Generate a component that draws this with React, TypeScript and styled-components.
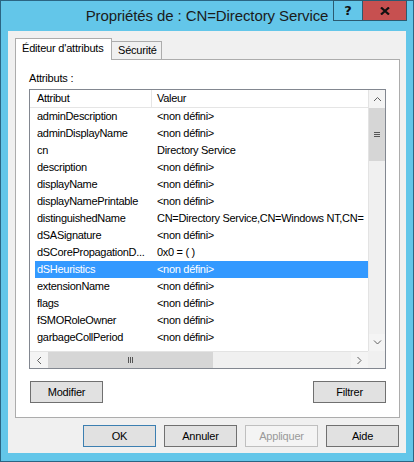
import React from "react";
import styled, { createGlobalStyle } from "styled-components";

const Global = createGlobalStyle`
  html, body { margin: 0; padding: 0; background: #ffffff; }
  body { font-family: "Liberation Sans", Arial, sans-serif; }
  * { box-sizing: border-box; }
`;

const Window = styled.div`
  position: relative;
  width: 414px;
  height: 462px;
  border: 1px solid #2b6583;
  background: #63c6e9;
  padding: 0 7px 8px 7px;
  display: flex;
  flex-direction: column;
`;

const TitleBar = styled.div`
  height: 30px;
  flex: none;
  display: flex;
  align-items: center;
  justify-content: center;
  padding-bottom: 2px;
  font-size: 15px;
  letter-spacing: -0.1px;
  color: #1b1b1b;
  white-space: nowrap;
`;

const CaptionGroup = styled.div`
  position: absolute;
  top: -1px;
  right: 6px;
  display: flex;
`;

const CaptionButton = styled.div<{ $close?: boolean }>`
  width: ${(p) => (p.$close ? "45px" : "30px")};
  height: 21px;
  margin-left: ${(p) => (p.$close ? "-1px" : "0")};
  border: 1px solid #2b5a70;
  background: ${(p) => (p.$close ? "#c75050" : "#63c6e9")};
  display: flex;
  align-items: center;
  justify-content: center;
  font-weight: bold;
  font-size: 13px;
  color: #111;
  font-family: "DejaVu Sans", "Liberation Sans", sans-serif;
`;

const Client = styled.div`
  flex: 1;
  background: #f0f0f0;
  padding: 7px 6px 6px 7px;
  display: flex;
  flex-direction: column;
`;

const TabStrip = styled.div`
  height: 21px;
  flex: none;
  display: flex;
  align-items: flex-end;
`;

const Tab = styled.div<{ $active?: boolean }>`
  position: relative;
  z-index: ${(p) => (p.$active ? 1 : 0)};
  height: ${(p) => (p.$active ? "22px" : "18px")};
  width: ${(p) => (p.$active ? "97px" : "51px")};
  margin-bottom: ${(p) => (p.$active ? "-1px" : "0")};
  margin-left: ${(p) => (p.$active ? "0" : "-1px")};
  padding-left: 6px;
  padding-bottom: ${(p) => (p.$active ? "3px" : "1px")};
  border: 1px solid #acacac;
  border-bottom: none;
  background: ${(p) => (p.$active ? "#ffffff" : "#f0f0f0")};
  display: flex;
  align-items: center;
  font-size: 11px;
  letter-spacing: -0.2px;
  color: #000;
  white-space: nowrap;
`;

const Panel = styled.div`
  height: 359px;
  flex: none;
  border: 1px solid #acacac;
  background: #ffffff;
  padding: 10px 13px 14px 13px;
  display: flex;
  flex-direction: column;
`;

const Label = styled.div`
  height: 16px;
  line-height: 16px;
  margin-bottom: 3px;
  font-size: 11px;
  letter-spacing: -0.2px;
  color: #000;
`;

const ListBox = styled.div`
  height: 280px;
  flex: none;
  border: 1px solid #828790;
  display: grid;
  grid-template-columns: 1fr 17px;
  grid-template-rows: 18px 1fr 17px;
  overflow: hidden;
  font-size: 11px;
  letter-spacing: -0.3px;
  color: #000;
`;

const Header = styled.div`
  grid-column: 1;
  grid-row: 1;
  display: flex;
  border-bottom: 1px solid #e5e5e5;
  background: #ffffff;
`;

const HeaderCell = styled.div<{ $first?: boolean }>`
  width: ${(p) => (p.$first ? "122px" : "auto")};
  flex: ${(p) => (p.$first ? "none" : "1")};
  padding-left: ${(p) => (p.$first ? "7px" : "5px")};
  border-right: ${(p) => (p.$first ? "1px solid #e5e5e5" : "none")};
  line-height: 17px;
  white-space: nowrap;
`;

const Body = styled.div`
  grid-column: 1;
  grid-row: 2;
  overflow: hidden;
  padding-left: 5px;
`;

const Row = styled.div<{ $selected?: boolean }>`
  display: flex;
  height: 17px;
  line-height: 17px;
  background: ${(p) => (p.$selected ? "#3399ff" : "transparent")};
  color: ${(p) => (p.$selected ? "#ffffff" : "#000000")};
  white-space: nowrap;
`;

const NameCell = styled.div`
  width: 122px;
  flex: none;
  padding-left: 2px;
  overflow: hidden;
`;

const ValueCell = styled.div`
  flex: 1;
  overflow: hidden;
`;

const VScroll = styled.div`
  grid-column: 2;
  grid-row: 1 / span 2;
  display: flex;
  flex-direction: column;
  background: #f0f0f0;
  border-left: 1px solid #e3e3e3;
`;

const HScroll = styled.div`
  grid-column: 1;
  grid-row: 3;
  display: flex;
  background: #f0f0f0;
  border-top: 1px solid #e3e3e3;
`;

const Corner = styled.div`
  grid-column: 2;
  grid-row: 3;
  background: #f0f0f0;
`;

const ArrowBox = styled.div<{ $size: number; $vertical?: boolean }>`
  flex: none;
  ${(p) => (p.$vertical ? `height: ${p.$size}px;` : `width: ${p.$size}px;`)}
  display: flex;
  align-items: center;
  justify-content: center;
  background: #f4f4f4;
`;

const Thumb = styled.div<{ $size: number; $vertical?: boolean }>`
  flex: none;
  ${(p) => (p.$vertical ? `height: ${p.$size}px;` : `width: ${p.$size}px;`)}
  background: #d6d6d6;
  display: flex;
  align-items: center;
  justify-content: center;
`;

const Track = styled.div`
  flex: 1;
`;

const ButtonRow = styled.div`
  margin-top: 12px;
  display: flex;
  justify-content: space-between;
  padding-left: 1px;
`;

const Button = styled.div<{ $default?: boolean; $disabled?: boolean }>`
  width: 73px;
  height: 22px;
  border: 1px solid
    ${(p) => (p.$default ? "#3c7fb1" : p.$disabled ? "#bfbfbf" : "#707070")};
  background: ${(p) => (p.$disabled ? "#f4f4f4" : "#e1e1e1")};
  color: ${(p) => (p.$disabled ? "#9a9a9a" : "#000000")};
  display: flex;
  align-items: center;
  justify-content: center;
  font-size: 11px;
  letter-spacing: -0.2px;
`;

const Footer = styled.div`
  margin-top: 7px;
  display: flex;
  justify-content: flex-end;
  gap: 8px;
  padding-right: 1px;
`;

const Chevron = ({ dir }: { dir: "up" | "down" | "left" | "right" }) => {
  const d = {
    up: "M1 5 L4.5 1.5 L8 5",
    down: "M1 1.5 L4.5 5 L8 1.5",
    left: "M5 1 L1.5 4.5 L5 8",
    right: "M1.5 1 L5 4.5 L1.5 8",
  }[dir];
  const vertical = dir === "up" || dir === "down";
  return (
    <svg
      width={vertical ? 9 : 7}
      height={vertical ? 7 : 9}
      viewBox={vertical ? "0 0 9 7" : "0 0 7 9"}
    >
      <path d={d} fill="none" stroke="#606060" strokeWidth="1" />
    </svg>
  );
};

const Grip = ({ vertical }: { vertical?: boolean }) =>
  vertical ? (
    <svg width="6" height="5" viewBox="0 0 6 5">
      <rect x="0" y="0" width="6" height="1" fill="#555" />
      <rect x="0" y="2" width="6" height="1" fill="#555" />
      <rect x="0" y="4" width="6" height="1" fill="#555" />
    </svg>
  ) : (
    <svg width="5" height="6" viewBox="0 0 5 6">
      <rect x="0" y="0" width="1" height="6" fill="#555" />
      <rect x="2" y="0" width="1" height="6" fill="#555" />
      <rect x="4" y="0" width="1" height="6" fill="#555" />
    </svg>
  );

const rows: [string, string][] = [
  ["adminDescription", "<non défini>"],
  ["adminDisplayName", "<non défini>"],
  ["cn", "Directory Service"],
  ["description", "<non défini>"],
  ["displayName", "<non défini>"],
  ["displayNamePrintable", "<non défini>"],
  ["distinguishedName", "CN=Directory Service,CN=Windows NT,CN="],
  ["dSASignature", "<non défini>"],
  ["dSCorePropagationD...", "0x0 = (  )"],
  ["dSHeuristics", "<non défini>"],
  ["extensionName", "<non défini>"],
  ["flags", "<non défini>"],
  ["fSMORoleOwner", "<non défini>"],
  ["garbageCollPeriod", "<non défini>"],
];

export default function App() {
  return (
    <>
      <Global />
      <Window>
        <TitleBar>Propriétés de : CN=Directory Service</TitleBar>
        <CaptionGroup>
          <CaptionButton>?</CaptionButton>
          <CaptionButton $close>
            <svg width="10" height="8" viewBox="0 0 10 8">
              <path d="M1 0.5 L9 7.5 M9 0.5 L1 7.5" stroke="#111" strokeWidth="2.2" />
            </svg>
          </CaptionButton>
        </CaptionGroup>
        <Client>
          <TabStrip>
            <Tab $active>Éditeur d'attributs</Tab>
            <Tab>Sécurité</Tab>
          </TabStrip>
          <Panel>
            <Label>Attributs :</Label>
            <ListBox>
              <Header>
                <HeaderCell $first>Attribut</HeaderCell>
                <HeaderCell>Valeur</HeaderCell>
              </Header>
              <Body>
                {rows.map(([name, value]) => (
                  <Row key={name} $selected={name === "dSHeuristics"}>
                    <NameCell>{name}</NameCell>
                    <ValueCell>{value}</ValueCell>
                  </Row>
                ))}
              </Body>
              <VScroll>
                <ArrowBox $vertical $size={18}>
                  <Chevron dir="up" />
                </ArrowBox>
                <Thumb $vertical $size={53}>
                  <Grip vertical />
                </Thumb>
                <Track />
                <ArrowBox $vertical $size={17}>
                  <Chevron dir="down" />
                </ArrowBox>
              </VScroll>
              <HScroll>
                <ArrowBox $size={18}>
                  <Chevron dir="left" />
                </ArrowBox>
                <Thumb $size={165}>
                  <Grip />
                </Thumb>
                <Track />
                <ArrowBox $size={17}>
                  <Chevron dir="right" />
                </ArrowBox>
              </HScroll>
              <Corner />
            </ListBox>
            <ButtonRow>
              <Button>Modifier</Button>
              <Button>Filtrer</Button>
            </ButtonRow>
          </Panel>
          <Footer>
            <Button $default>OK</Button>
            <Button>Annuler</Button>
            <Button $disabled>Appliquer</Button>
            <Button>Aide</Button>
          </Footer>
        </Client>
      </Window>
    </>
  );
}
